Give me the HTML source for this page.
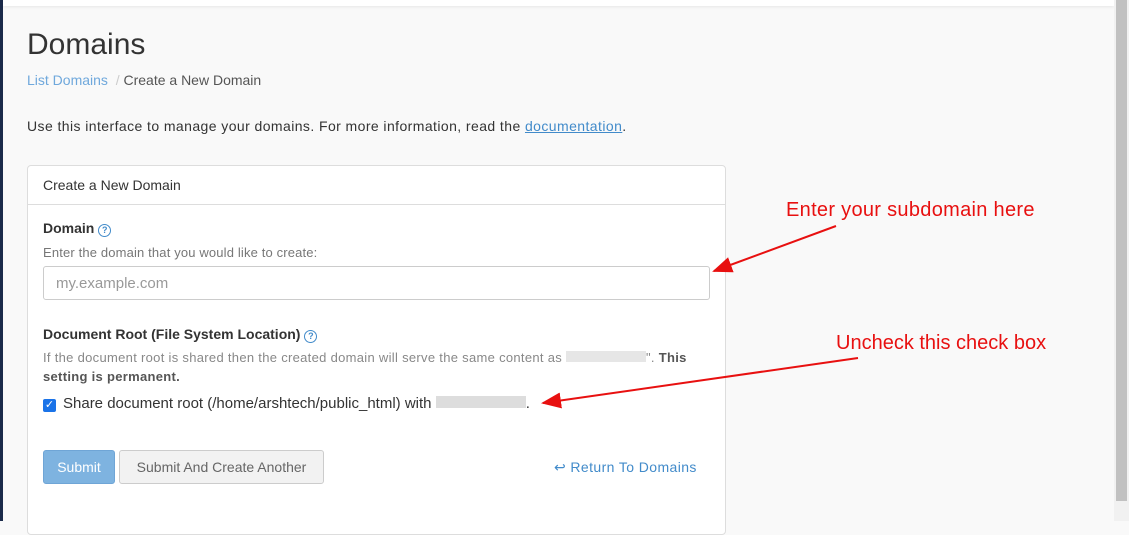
<!DOCTYPE html>
<html><head><meta charset="utf-8"><style>
*{box-sizing:border-box;margin:0;padding:0}
body{width:1129px;height:521px;overflow:hidden;background:#f9f9f9;font-family:"Liberation Sans",sans-serif;position:relative;color:#333}
.abs{position:absolute;white-space:nowrap}
.q{display:inline-block;width:13px;height:13px;border:1.5px solid #428bca;border-radius:50%;color:#428bca;font-size:9px;text-align:center;line-height:10px;vertical-align:0px;font-weight:bold}
</style></head><body>
<div class="abs" style="left:0;top:0;width:3px;height:521px;background:#1b2a4a"></div>
<div class="abs" style="left:3px;top:0;width:1111px;height:6px;background:#fff;box-shadow:0 1px 3px rgba(0,0,0,.08)"></div>
<div class="abs" style="left:1114px;top:0;width:15px;height:521px;background:#f1f1f1"></div>
<div class="abs" style="left:1116px;top:0;width:11px;height:501px;background:#c1c1c1"></div>

<div class="abs" style="left:27px;top:28px;font-size:30px;color:#333">Domains</div>
<div class="abs" style="left:27px;top:72px;font-size:14px;color:#6fa8dc">List Domains <span style="color:#ccc">&nbsp;/&nbsp;</span><span style="color:#555">Create a New Domain</span></div>
<div class="abs" style="left:27px;top:118px;font-size:14px;color:#333;letter-spacing:0.42px">Use this interface to manage your domains. For more information, read the <span style="color:#428bca;text-decoration:underline">documentation</span>.</div>

<div class="abs" style="left:27px;top:165px;width:699px;height:370px;background:#fff;border:1px solid #ddd;border-radius:4px"></div>
<div class="abs" style="left:28px;top:204px;width:697px;height:1px;background:#ddd"></div>
<div class="abs" style="left:43px;top:177px;font-size:14px;color:#333">Create a New Domain</div>

<div class="abs" style="left:43px;top:220px;font-size:14px;font-weight:bold;color:#333">Domain <span class="q">?</span></div>
<div class="abs" style="left:43px;top:245px;font-size:13px;color:#777;letter-spacing:0.15px">Enter the domain that you would like to create:</div>
<div class="abs" style="left:43px;top:266px;width:667px;height:34px;border:1px solid #ccc;border-radius:3px;background:#fff;padding:8px 12px;font-size:15px;color:#999">my.example.com</div>

<div class="abs" style="left:43px;top:326px;font-size:14px;font-weight:bold;color:#333">Document Root (File System Location) <span class="q">?</span></div>
<div class="abs" style="left:43px;top:350px;font-size:13px;color:#888;letter-spacing:0.3px">If the document root is shared then the created domain will serve the same content as <span style="display:inline-block;width:80px;height:11px;background:#e6e6e6"></span>". <b style="color:#555">This</b></div>
<div class="abs" style="left:43px;top:369px;font-size:13px;color:#555;font-weight:bold;letter-spacing:0.3px">setting is permanent.</div>
<div class="abs" style="left:43px;top:399px;width:13px;height:13px;background:#1a73e8;border-radius:2px;color:#fff;font-size:11px;line-height:13px;text-align:center">✓</div>
<div class="abs" style="left:63px;top:395px;font-size:15px;color:#333">Share document root (/home/arshtech/public_html) with <span style="display:inline-block;width:90px;height:12px;background:#ddd"></span>.</div>

<div class="abs" style="left:43px;top:450px;width:72px;height:34px;background:#7eb3e0;border:1px solid #6fa5d6;border-radius:3px;color:#fff;font-size:14px;text-align:center;line-height:32px">Submit</div>
<div class="abs" style="left:119px;top:450px;width:205px;height:34px;background:#f2f2f2;border:1px solid #ccc;border-radius:3px;color:#666;font-size:14px;text-align:center;line-height:32px">Submit And Create Another</div>
<div class="abs" style="left:554px;top:459px;font-size:14px;color:#428bca;letter-spacing:0.4px">↩ Return To Domains</div>

<div class="abs" style="left:786px;top:199px;font-size:20px;color:#e81010;letter-spacing:0.3px">Enter your subdomain here</div>
<div class="abs" style="left:836px;top:332px;font-size:20px;color:#e81010">Uncheck this check box</div>
<svg class="abs" style="left:0;top:0" width="1129" height="521">
<defs><marker id="a" markerWidth="10" markerHeight="8" refX="9" refY="4" orient="auto"><path d="M0,0L10,4L0,8z" fill="#e81010"/></marker></defs>
<line x1="836" y1="226" x2="714" y2="271" stroke="#e81010" stroke-width="2" marker-end="url(#a)"/>
<line x1="858" y1="358" x2="543" y2="403" stroke="#e81010" stroke-width="2" marker-end="url(#a)"/>
</svg>
</body></html>
